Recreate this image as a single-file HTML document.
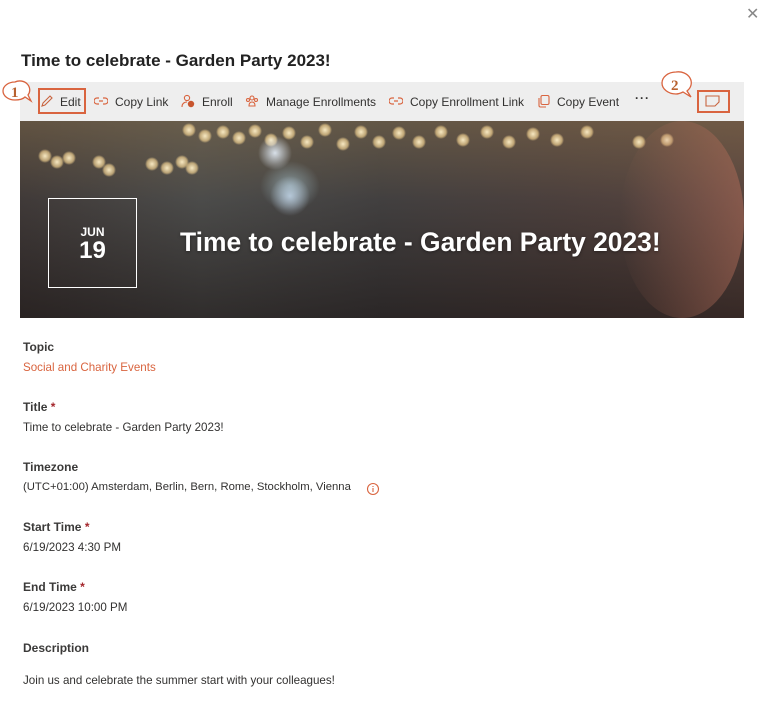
<!DOCTYPE html>
<html><head><style>
body{margin:0;width:768px;height:710px;background:#fff;font-family:"Liberation Sans",sans-serif;color:#323130;position:relative;overflow:hidden}
.a{position:absolute}
.t{font-size:12px;white-space:nowrap}
.lbl{font-size:12px;font-weight:bold;color:#3b3a39;white-space:nowrap}
.val{font-size:11.6px;color:#323130;white-space:nowrap}
.star{color:#a4262c}
.bk{position:absolute;border-radius:50%}
.d{position:absolute;width:14px;height:14px;border-radius:50%;background:radial-gradient(closest-side,rgba(255,240,200,.95),rgba(255,220,150,.6) 70%,rgba(255,210,140,0))}
</style></head><body>
<div class="a" style="left:746px;top:4px;font-size:16px;color:#888">✕</div>
<div class="a" style="left:21px;top:51px;font-size:17px;font-weight:bold;color:#222">Time to celebrate - Garden Party 2023!</div>
<div class="a" style="left:20px;top:82px;width:724px;height:39px;background:#eeeeee"></div>
<div class="a" style="left:38px;top:88px;width:48px;height:26px;border:2px solid #d9643f;box-sizing:border-box"></div>
<svg class="a" style="left:40px;top:94px" width="14" height="14" viewBox="0 0 14 14"><path d="M2 12l1-3 7-7 2 2-7 7z" fill="none" stroke="#c8643f" stroke-width="1.1"/></svg>
<div class="a t" style="left:60px;top:95px">Edit</div>
<svg class="a" style="left:94px;top:96px" width="14" height="10"><path d="M5 2H3a3 3 0 000 6h2M9 2h2a3 3 0 010 6H9M5 5h4" fill="none" stroke="#d9643f" stroke-width="1.2"/></svg>
<div class="a t" style="left:115px;top:95px">Copy Link</div>
<svg class="a" style="left:181px;top:94px" width="14" height="14"><circle cx="6" cy="4" r="2.6" fill="none" stroke="#d9643f" stroke-width="1.1"/><path d="M1 13c0-4 3-5 5-5" fill="none" stroke="#d9643f" stroke-width="1.1"/><circle cx="10" cy="10" r="3.2" fill="#c8552e"/></svg>
<div class="a t" style="left:202px;top:95px">Enroll</div>
<svg class="a" style="left:245px;top:94px" width="14" height="14"><g fill="none" stroke="#d9643f" stroke-width="1.1"><circle cx="7" cy="4" r="2"/><circle cx="3" cy="6" r="1.5"/><circle cx="11" cy="6" r="1.5"/><path d="M4 12c0-3 1.5-4 3-4s3 1 3 4z"/></g></svg>
<div class="a t" style="left:266px;top:95px">Manage Enrollments</div>
<svg class="a" style="left:389px;top:96px" width="14" height="10"><path d="M5 2H3a3 3 0 000 6h2M9 2h2a3 3 0 010 6H9M5 5h4" fill="none" stroke="#d9643f" stroke-width="1.2"/></svg>
<div class="a t" style="left:410px;top:95px">Copy Enrollment Link</div>
<svg class="a" style="left:537px;top:94px" width="14" height="14"><rect x="4" y="1.5" width="8" height="9" rx="1.5" fill="none" stroke="#d9643f" stroke-width="1.1"/><path d="M2 4v7.5a1.5 1.5 0 001.5 1.5H9" fill="none" stroke="#d9643f" stroke-width="1.1"/></svg>
<div class="a t" style="left:557px;top:95px">Copy Event</div>
<div class="a t" style="left:635px;top:91px;font-weight:bold;letter-spacing:1px">···</div>
<div class="a" style="left:697px;top:90px;width:33px;height:23px;border:2px solid #d9643f;box-sizing:border-box"></div>
<svg class="a" style="left:705px;top:95px" width="16" height="12"><path d="M1 1h13v6l-4 4H1z" fill="none" stroke="#c8643f" stroke-width="1.1"/></svg>
<svg class="a" style="left:1px;top:80px" width="34" height="26"><path d="M14 2a12 9 0 100 18c4 0 8-1 10-3l6 4-3-6a10 9 0 00-13-13z" fill="#fff" stroke="#d9643f" stroke-width="1.3"/><text x="10" y="17" font-family="Liberation Serif" font-size="15" font-weight="bold" fill="#b8612f">1</text></svg>
<svg class="a" style="left:660px;top:70px" width="36" height="30"><path d="M16 2a14 11 0 100 22c3 0 5-1 7-2l8 5-4-6a13 11 0 00-11-19z" fill="#fff" stroke="#d9643f" stroke-width="1.3"/><text x="11" y="20" font-family="Liberation Serif" font-size="15" font-weight="bold" fill="#b8612f">2</text></svg>
<div class="a" style="left:20px;top:121px;width:724px;height:197px;overflow:hidden;background:linear-gradient(90deg,#3a3230 0%,#4a4a48 25%,#3d3a3a 50%,#4a3a36 75%,#5a4038 100%)">
 <div class="a" style="left:0;top:0;width:724px;height:197px;background:linear-gradient(180deg,rgba(130,110,80,.55) 0%,rgba(80,80,80,.25) 40%,rgba(30,25,25,.6) 100%)"></div>
 <div class="d" style="left:162px;top:2px"></div><div class="d" style="left:178px;top:8px"></div><div class="d" style="left:196px;top:4px"></div><div class="d" style="left:212px;top:10px"></div><div class="d" style="left:228px;top:3px"></div><div class="d" style="left:244px;top:12px"></div><div class="d" style="left:262px;top:5px"></div><div class="d" style="left:280px;top:14px"></div><div class="d" style="left:298px;top:2px"></div><div class="d" style="left:316px;top:16px"></div><div class="d" style="left:334px;top:4px"></div><div class="d" style="left:352px;top:14px"></div><div class="d" style="left:372px;top:5px"></div><div class="d" style="left:392px;top:14px"></div><div class="d" style="left:414px;top:4px"></div><div class="d" style="left:436px;top:12px"></div><div class="d" style="left:460px;top:4px"></div><div class="d" style="left:482px;top:14px"></div><div class="d" style="left:506px;top:6px"></div><div class="d" style="left:530px;top:12px"></div><div class="d" style="left:560px;top:4px"></div><div class="d" style="left:612px;top:14px"></div><div class="d" style="left:640px;top:12px"></div>
 <div class="d" style="left:18px;top:28px"></div><div class="d" style="left:30px;top:34px"></div><div class="d" style="left:42px;top:30px"></div><div class="d" style="left:72px;top:34px"></div><div class="d" style="left:82px;top:42px"></div>
 <div class="d" style="left:125px;top:36px"></div><div class="d" style="left:140px;top:40px"></div><div class="d" style="left:155px;top:34px"></div><div class="d" style="left:165px;top:40px"></div>
 <div class="bk" style="left:240px;top:40px;width:60px;height:50px;background:radial-gradient(closest-side,rgba(170,200,210,.6),rgba(170,200,210,0))"></div>
 <div class="bk" style="left:250px;top:55px;width:40px;height:40px;background:radial-gradient(closest-side,rgba(200,220,240,.8),rgba(200,220,240,0))"></div>
 <div class="bk" style="left:238px;top:15px;width:34px;height:34px;background:radial-gradient(closest-side,rgba(230,240,250,.9),rgba(200,220,240,0))"></div>
 <div class="bk" style="left:600px;top:0;width:124px;height:197px;background:linear-gradient(90deg,rgba(150,90,70,0),rgba(180,110,90,.5))"></div>
 <div class="a" style="left:28px;top:77px;width:89px;height:90px;border:1px solid #fff;box-sizing:border-box"></div>
 <div class="a" style="left:28px;top:104px;width:89px;text-align:center;color:#fff;font-size:12px;font-weight:bold">JUN</div>
 <div class="a" style="left:28px;top:116px;width:89px;text-align:center;color:#fff;font-size:24px;font-weight:bold">19</div>
 <div class="a" style="left:160px;top:106px;color:#fff;font-size:26.4px;font-weight:bold;white-space:nowrap;text-shadow:0 1px 3px rgba(0,0,0,.4)">Time to celebrate - Garden Party 2023!</div>
</div>
<div class="a lbl" style="left:23px;top:340px">Topic</div>
<div class="a val" style="left:23px;top:361px;color:#d9643f">Social and Charity Events</div>
<div class="a lbl" style="left:23px;top:400px">Title <span class="star">*</span></div>
<div class="a val" style="left:23px;top:421px">Time to celebrate - Garden Party 2023!</div>
<div class="a lbl" style="left:23px;top:460px">Timezone</div>
<div class="a val" style="left:23px;top:481px;font-size:11.3px">(UTC+01:00) Amsterdam, Berlin, Bern, Rome, Stockholm, Vienna</div>
<svg class="a" style="left:366px;top:482px" width="14" height="14"><circle cx="7" cy="7" r="5.5" fill="none" stroke="#d9643f" stroke-width="1.1"/><path d="M7 6v4M7 4v1" stroke="#d9643f" stroke-width="1.1"/></svg>
<div class="a lbl" style="left:23px;top:520px">Start Time <span class="star">*</span></div>
<div class="a val" style="left:23px;top:541px">6/19/2023 4:30 PM</div>
<div class="a lbl" style="left:23px;top:580px">End Time <span class="star">*</span></div>
<div class="a val" style="left:23px;top:601px">6/19/2023 10:00 PM</div>
<div class="a lbl" style="left:23px;top:641px">Description</div>
<div class="a val" style="left:23px;top:674px">Join us and celebrate the summer start with your colleagues!</div>
</body></html>
